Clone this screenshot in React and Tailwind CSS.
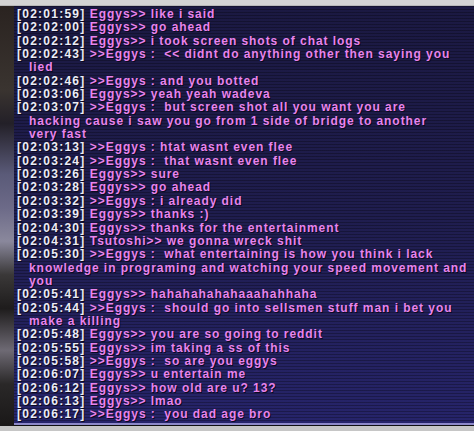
import React from 'react';

const log = [
  ['02:01:59', 'Eggys>> like i said'],
  ['02:02:00', 'Eggys>> go ahead'],
  ['02:02:12', 'Eggys>> i took screen shots of chat logs'],
  ['02:02:43', '>>Eggys :  << didnt do anything other then saying you', 'lied'],
  ['02:02:46', '>>Eggys : and you botted'],
  ['02:03:06', 'Eggys>> yeah yeah wadeva'],
  ['02:03:07', '>>Eggys :  but screen shot all you want you are', 'hacking cause i saw you go from 1 side of bridge to another', 'very fast'],
  ['02:03:13', '>>Eggys : htat wasnt even flee'],
  ['02:03:24', '>>Eggys :  that wasnt even flee'],
  ['02:03:26', 'Eggys>> sure'],
  ['02:03:28', 'Eggys>> go ahead'],
  ['02:03:32', '>>Eggys : i already did'],
  ['02:03:39', 'Eggys>> thanks :)'],
  ['02:04:30', 'Eggys>> thanks for the entertainment'],
  ['02:04:31', 'Tsutoshi>> we gonna wreck shit'],
  ['02:05:30', '>>Eggys :  what entertaining is how you think i lack', 'knowledge in programing and watching your speed movement and', 'you'],
  ['02:05:41', 'Eggys>> hahahahahahaaahahhaha'],
  ['02:05:44', '>>Eggys :  should go into sellsmen stuff man i bet you', 'make a killing'],
  ['02:05:48', 'Eggys>> you are so going to reddit'],
  ['02:05:55', 'Eggys>> im taking a ss of this'],
  ['02:05:58', '>>Eggys :  so are you eggys'],
  ['02:06:07', 'Eggys>> u entertain me'],
  ['02:06:12', 'Eggys>> how old are u? 13?'],
  ['02:06:13', 'Eggys>> lmao'],
  ['02:06:17', '>>Eggys :  you dad age bro'],
];

const ChatLine = ({ time, lines }) => (
  <>
    <div className="whitespace-pre">
      <span className="text-[#ececf6] tracking-[1.25px]">[{time}]</span>
      <span className="text-[#e884ec]"> {lines[0]}</span>
    </div>
    {lines.slice(1).map((l, i) => (
      <div key={i} className="whitespace-pre pl-[12px] text-[#e884ec]">
        {l}
      </div>
    ))}
  </>
);

export default function App() {
  return (
    <div className="w-[474px] h-[431px] overflow-hidden flex flex-col bg-[#c9c9c9]">
      {/* top window bar */}
      <div className="h-[6px] shrink-0 bg-[#d3d3d3] border-b border-[#b8b8b8]" />

      <div className="flex flex-1 min-h-0">
        {/* game scene peeking out on the left */}
        <div className="w-[14px] shrink-0 bg-[linear-gradient(to_bottom,#2a2320_0%,#3a3430_20%,#232028_28%,#5a5a78_40%,#6c6a88_48%,#8a889c_56%,#3a3838_64%,#1e1c1c_72%,#6e6a74_82%,#2a2828_90%,#1a1818_100%)]" />

        {/* chat log */}
        <div className="relative flex-1 flex flex-col bg-[linear-gradient(to_bottom,#1b1942,#1f1d4e_50%,#26246a)]">
          <div className="absolute inset-0 bg-[repeating-linear-gradient(to_bottom,rgba(0,0,0,0.28)_0px,rgba(0,0,0,0.28)_1px,transparent_1px,transparent_3px)] pointer-events-none" />
          <div className="relative flex-1 pt-[2px] pl-[3px] font-['Liberation_Sans',Arial,sans-serif] font-bold text-[12px] leading-[13.35px] tracking-[0.95px] [text-shadow:1px_1px_0_#0a0820]">
            {log.map(([time, ...lines]) => (
              <ChatLine key={time} time={time} lines={lines} />
            ))}
          </div>
          <div className="relative h-[2px] shrink-0 bg-[#8c88c8]" />
          <div className="relative h-[1px] shrink-0 bg-[#101010]" />
        </div>
      </div>

      {/* bottom window bar */}
      <div className="h-[5px] shrink-0 bg-[#c6c6c6]" />
    </div>
  );
}
